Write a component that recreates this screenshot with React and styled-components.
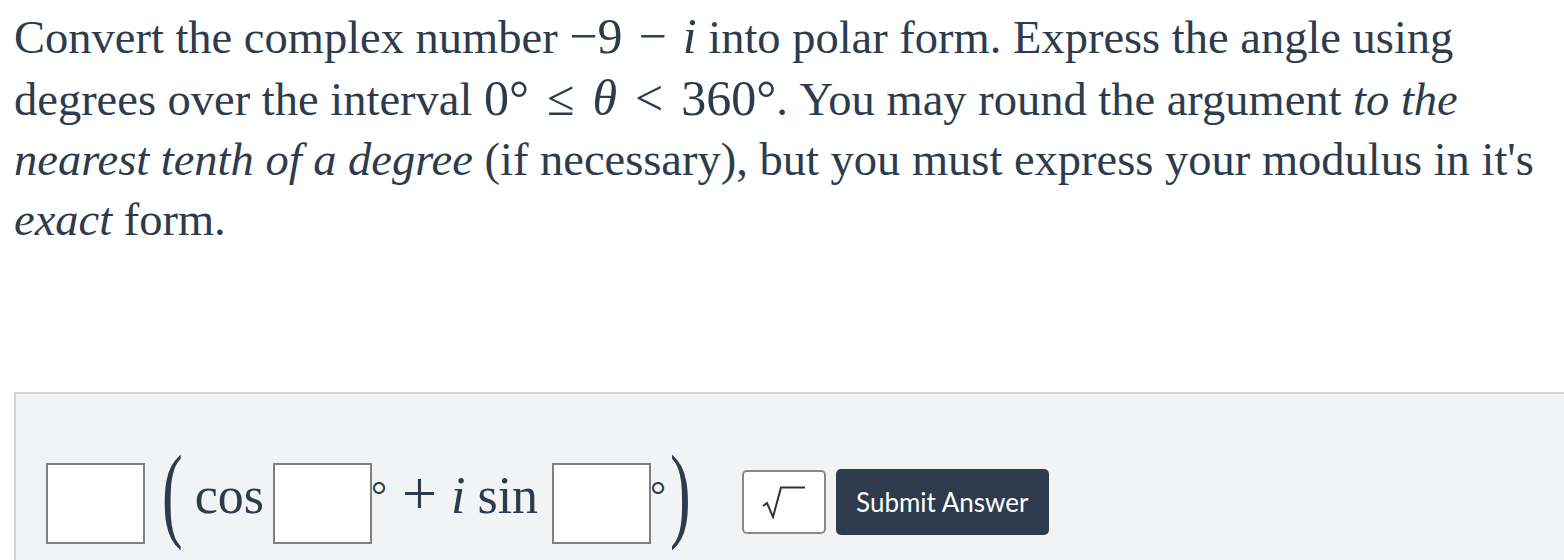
import React from 'react'
import styled, { createGlobalStyle } from 'styled-components'

const GlobalStyle = createGlobalStyle`
  html, body {
    margin: 0;
    padding: 0;
    background: #ffffff;
  }
  body {
    font-family: "Liberation Serif", "Times New Roman", serif;
    color: #2d3b4d;
  }
`;

const Page = styled.div`
  width: 1564px;
  height: 560px;
  overflow: hidden;
`;

const Question = styled.p`
  margin: 0;
  padding: 6px 0 0 14px;
  font-size: 46.5px;
  line-height: 60px;
  white-space: nowrap;
`;

const Math = styled.span`
  font-size: 50px;
  font-style: ${(p) => (p.$italic ? 'italic' : 'normal')};
  padding: 0 ${(p) => p.$space || 0}px;
`;

const Em = styled.em`
  font-style: italic;
`;

const Panel = styled.section`
  margin: 142px 0 0 14px;
  height: 200px;
  background: #f2f3f5;
  border-top: 2px solid #cfd2d6;
  border-left: 2px solid #cfd2d6;
  padding: 69px 0 0 30px;
  box-sizing: border-box;
`;

const Row = styled.div`
  display: flex;
  align-items: center;
  height: 81px;
`;

const AnswerBox = styled.div`
  flex: none;
  width: 99px;
  height: 81px;
  box-sizing: border-box;
  border: 2px solid #808080;
  background: #ffffff;
`;

const Paren = styled.span`
  display: inline-block;
  font-size: 62px;
  line-height: 1;
  transform: scaleY(1.7);
  margin: ${(p) => p.$m};
`;

const Word = styled.span`
  font-size: ${(p) => p.$size || 52}px;
  font-style: ${(p) => (p.$italic ? 'italic' : 'normal')};
  line-height: 1;
  margin: ${(p) => p.$m || '0'};
`;

const Degree = styled.span`
  flex: none;
  margin: 13px 0 0 -1px;
  font-size: 40px;
  line-height: 1;
  align-self: flex-start;
`;

const SqrtButton = styled.button`
  flex: none;
  width: 84px;
  height: 64px;
  margin: 0 0 3px 51px;
  border: 2px solid #8a8a8a;
  border-radius: 5px;
  background: #ffffff;
  display: flex;
  align-items: center;
  justify-content: center;
  padding: 0;
`;

const SubmitButton = styled.button`
  flex: none;
  height: 66px;
  width: 213px;
  margin: 0 0 3px 10px;
  border: none;
  border-radius: 5px;
  background: #2d3b4d;
  color: #ffffff;
  font-family: Lato, "Open Sans", sans-serif;
  font-size: 26px;
  padding: 0;
`;

const App = () => {
  return (
    <Page>
      <GlobalStyle />
      <Question>
        Convert the complex number <Math>−9</Math><Math $space={16}>−</Math><Math $italic>i</Math> into polar form. Express the angle using
        <br />
        degrees over the interval <Math>0°</Math><Math $space={18}>≤</Math><Math $italic>θ</Math><Math $space={18}>&lt;</Math><Math>360°</Math>. You may round the argument <Em>to the</Em>
        <br />
        <Em>nearest tenth of a degree</Em> (if necessary), but you must express your modulus in it's
        <br />
        <Em>exact</Em> form.
      </Question>
      <Panel>
        <Row>
          <AnswerBox />
          <Paren $m="0 12px 24px 17px">(</Paren>
          <Word $m="0 9px 16px 0">cos</Word>
          <AnswerBox />
          <Degree>°</Degree>
          <Word $size={62} $m="0 14px 22px 15px">+</Word>
          <Word $italic $m="0 12px 16px 0">i</Word>
          <Word $m="0 14px 16px 0">sin</Word>
          <AnswerBox />
          <Degree>°</Degree>
          <Paren $m="0 0 24px 4px">)</Paren>
          <SqrtButton aria-label="square root">
            <svg width="44" height="33" viewBox="0 0 44 33" fill="none">
              <path d="M1 20 L5 17 L11 31 L19 1.5 L43 1.5" stroke="#333" strokeWidth="2" strokeLinejoin="miter" />
            </svg>
          </SqrtButton>
          <SubmitButton>Submit Answer</SubmitButton>
        </Row>
      </Panel>
    </Page>
  )
}

export default App
